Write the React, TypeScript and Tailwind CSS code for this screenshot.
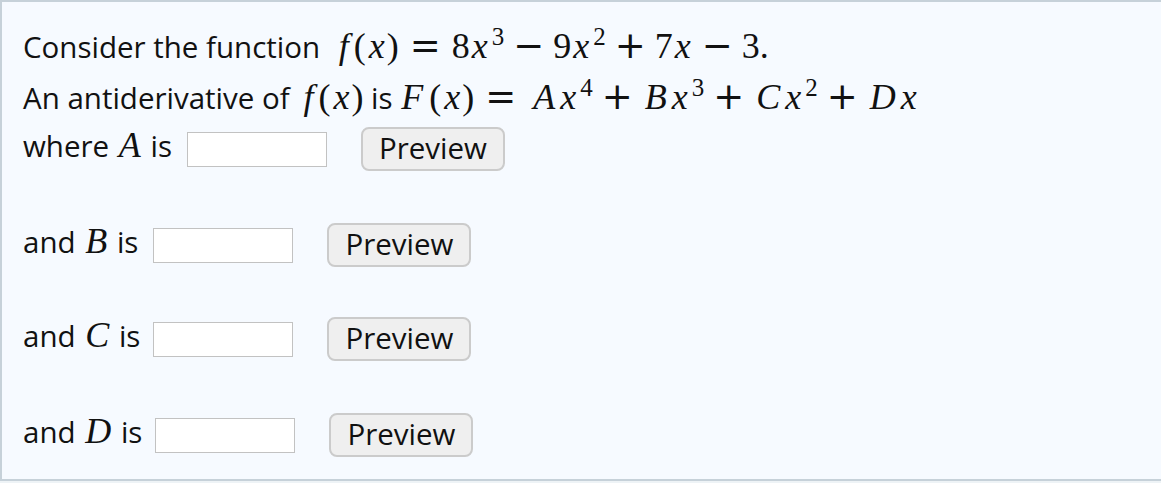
import React from "react";

const V = ({ c, cls }: { c: string; cls?: string }) => (
  <span className={`italic ${cls ?? ""}`}>{c}</span>
);
const X = () => <span className="italic px-[2px]">x</span>;
const Sup = ({ c }: { c: string }) => (
  <span className="text-[25px] align-[13px] leading-none not-italic ml-[2px]">{c}</span>
);
const Op = ({ c, w }: { c: string; w?: string }) => (
  <span
    className={`font-['DejaVu_Sans',sans-serif] text-[37px] leading-none ${w ?? "mx-[9px]"}`}
  >
    {c}
  </span>
);
const M = ({ children, cls }: { children: React.ReactNode; cls?: string }) => (
  <span className={`font-['Liberation_Serif',serif] text-[36px] leading-none ${cls ?? ""}`}>
    {children}
  </span>
);
const FX = ({ F }: { F: string }) => (
  <>
    <V c={F} cls={F === "f" ? "pl-[6px] pr-[5px]" : "pl-[1px] pr-[6px]"} />
    <span className="pr-[1px]">(</span>
    <X />
    <span>)</span>
  </>
);
const Cap = ({ c, cls }: { c: string; cls?: string }) => <V c={c} cls={cls ?? "px-[3px]"} />;

const Input = () => (
  <div className="w-[140px] h-[35px] bg-white border border-[#c2c2c2] shrink-0" />
);
const Btn = () => (
  <div className="w-[144px] h-[44px] rounded-[8px] bg-[#efefef] border-2 border-[#cbcbcb] flex items-center justify-center text-[29.5px] text-[#111] shrink-0 ml-[34px]">
    <span className="pb-[2px]">Preview</span>
  </div>
);

const Row = ({ label, top }: { label: string; top: string }) => (
  <div className={`flex items-center h-[48px] ${top}`}>
    <span className="whitespace-nowrap pb-[5px]">
      {label === "A" ? "where " : "and "}
      <M>
        <Cap c={label} cls="px-[2px]" />
      </M>{" "}
      is
    </span>
    <div className={label === "A" || label === "B" ? "ml-[15px]" : "ml-[13px]"}>
      <Input />
    </div>
    <Btn />
  </div>
);

export default function App() {
  return (
    <div className="w-[1161px] h-[483px] bg-[#eef3f6] overflow-hidden">
      <div className="w-[1170px] h-[481px] bg-[#f6faff] border-2 border-[#c6d1d9] pl-[21px] pt-[19px] font-['Open_Sans',sans-serif] text-[29.5px] text-[#111]">
        <div className="h-[51px] leading-[51px] whitespace-nowrap">
          Consider the function{" "}
          <M cls="ml-[5px]">
            <FX F="f" />
            <Op c="=" w="mx-[11px]" />
            8<X />
            <Sup c="3" />
            <Op c="−" />
            9<X />
            <Sup c="2" />
            <Op c="+" />
            7<X />
            <Op c="−" />
            3.
          </M>
        </div>
        <div className="h-[51px] leading-[51px] whitespace-nowrap">
          An antiderivative of{" "}
          <M>
            <FX F="f" />
          </M>{" "}
          is{" "}
          <M>
            <FX F="F" />
            <Op c="=" w="ml-[11px] mr-[14px]" />
            <Cap c="A" />
            <X />
            <Sup c="4" />
            <Op c="+" />
            <Cap c="B" />
            <X />
            <Sup c="3" />
            <Op c="+" />
            <Cap c="C" />
            <X />
            <Sup c="2" />
            <Op c="+" />
            <Cap c="D" />
            <X />
          </M>
        </div>
        <Row label="A" top="mt-[2px]" />
        <Row label="B" top="mt-[48px]" />
        <Row label="C" top="mt-[46px]" />
        <Row label="D" top="mt-[48px]" />
      </div>
    </div>
  );
}
